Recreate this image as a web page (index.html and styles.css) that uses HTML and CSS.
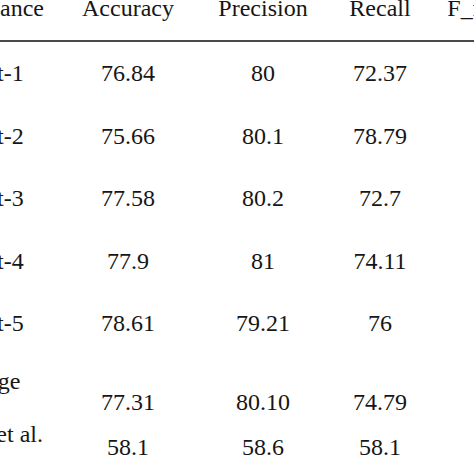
FILE: index.html
```html
<!DOCTYPE html>
<html>
<head>
  <meta charset="utf-8">
  <meta name="viewport" content="width=device-width, initial-scale=1">
  <link rel="stylesheet" href="styles.css">
</head>
<body>
  <div class="results">
    <div class="row head">
      <div class="cell label">Instance</div>
      <div class="cell">Accuracy</div>
      <div class="cell">Precision</div>
      <div class="cell">Recall</div>
      <div class="cell">F_measure</div>
    </div>

    <div class="row">
      <div class="cell label">Test-1</div>
      <div class="cell">76.84</div>
      <div class="cell">80</div>
      <div class="cell">72.37</div>
      <div class="cell">76.01</div>
    </div>
    <div class="row">
      <div class="cell label">Test-2</div>
      <div class="cell">75.66</div>
      <div class="cell">80.1</div>
      <div class="cell">78.79</div>
      <div class="cell">79.44</div>
    </div>
    <div class="row">
      <div class="cell label">Test-3</div>
      <div class="cell">77.58</div>
      <div class="cell">80.2</div>
      <div class="cell">72.7</div>
      <div class="cell">76.27</div>
    </div>
    <div class="row">
      <div class="cell label">Test-4</div>
      <div class="cell">77.9</div>
      <div class="cell">81</div>
      <div class="cell">74.11</div>
      <div class="cell">77.40</div>
    </div>
    <div class="row">
      <div class="cell label">Test-5</div>
      <div class="cell">78.61</div>
      <div class="cell">79.21</div>
      <div class="cell">76</div>
      <div class="cell">77.57</div>
    </div>

    <div class="row summary">
      <div class="cell label avg">Average</div>
      <div class="cell">77.31</div>
      <div class="cell">80.10</div>
      <div class="cell">74.79</div>
      <div class="cell">77.34</div>
    </div>
    <div class="row compare">
      <div class="cell label ref">Xu et al.</div>
      <div class="cell">58.1</div>
      <div class="cell">58.6</div>
      <div class="cell">58.1</div>
      <div class="cell">58.3</div>
    </div>
  </div>
</body>
</html>
```

FILE: styles.css
```css
/* Base styles */
html, body {
  margin: 0;
  padding: 0;
  background: #fff;
  overflow: hidden;
}

body {
  width: 474px;
  height: 474px;
  font: 24px/24px "Liberation Serif", "Times New Roman", serif;
  color: #161616;
}

/* Table crop: the left edge of the first column is cut off */
.results {
  width: 616px;
  margin: -4px 0 0 -36px;
}

.row {
  display: grid;
  grid-template-columns: 106px 116px 154px 80px 160px;
}

.cell {
  text-align: center;
  white-space: nowrap;
  padding: 19px 0 19.5px;
}

.cell.label {
  text-align: left;
}

/* Header row */
.head {
  border-bottom: 2px solid #4a4a4a;
}

.head .cell {
  padding: 0 0 20px;
}

/* Summary rows */
.summary .cell {
  padding: 35.5px 0 4px;
}

.summary .cell.label {
  padding-top: 14.5px;
}

.compare .cell {
  padding: 17px 0 20px;
}

.compare .cell.label {
  padding-top: 4px;
}

.avg {
  margin-left: -23px;
}

.ref {
  margin-left: -3px;
}
```
